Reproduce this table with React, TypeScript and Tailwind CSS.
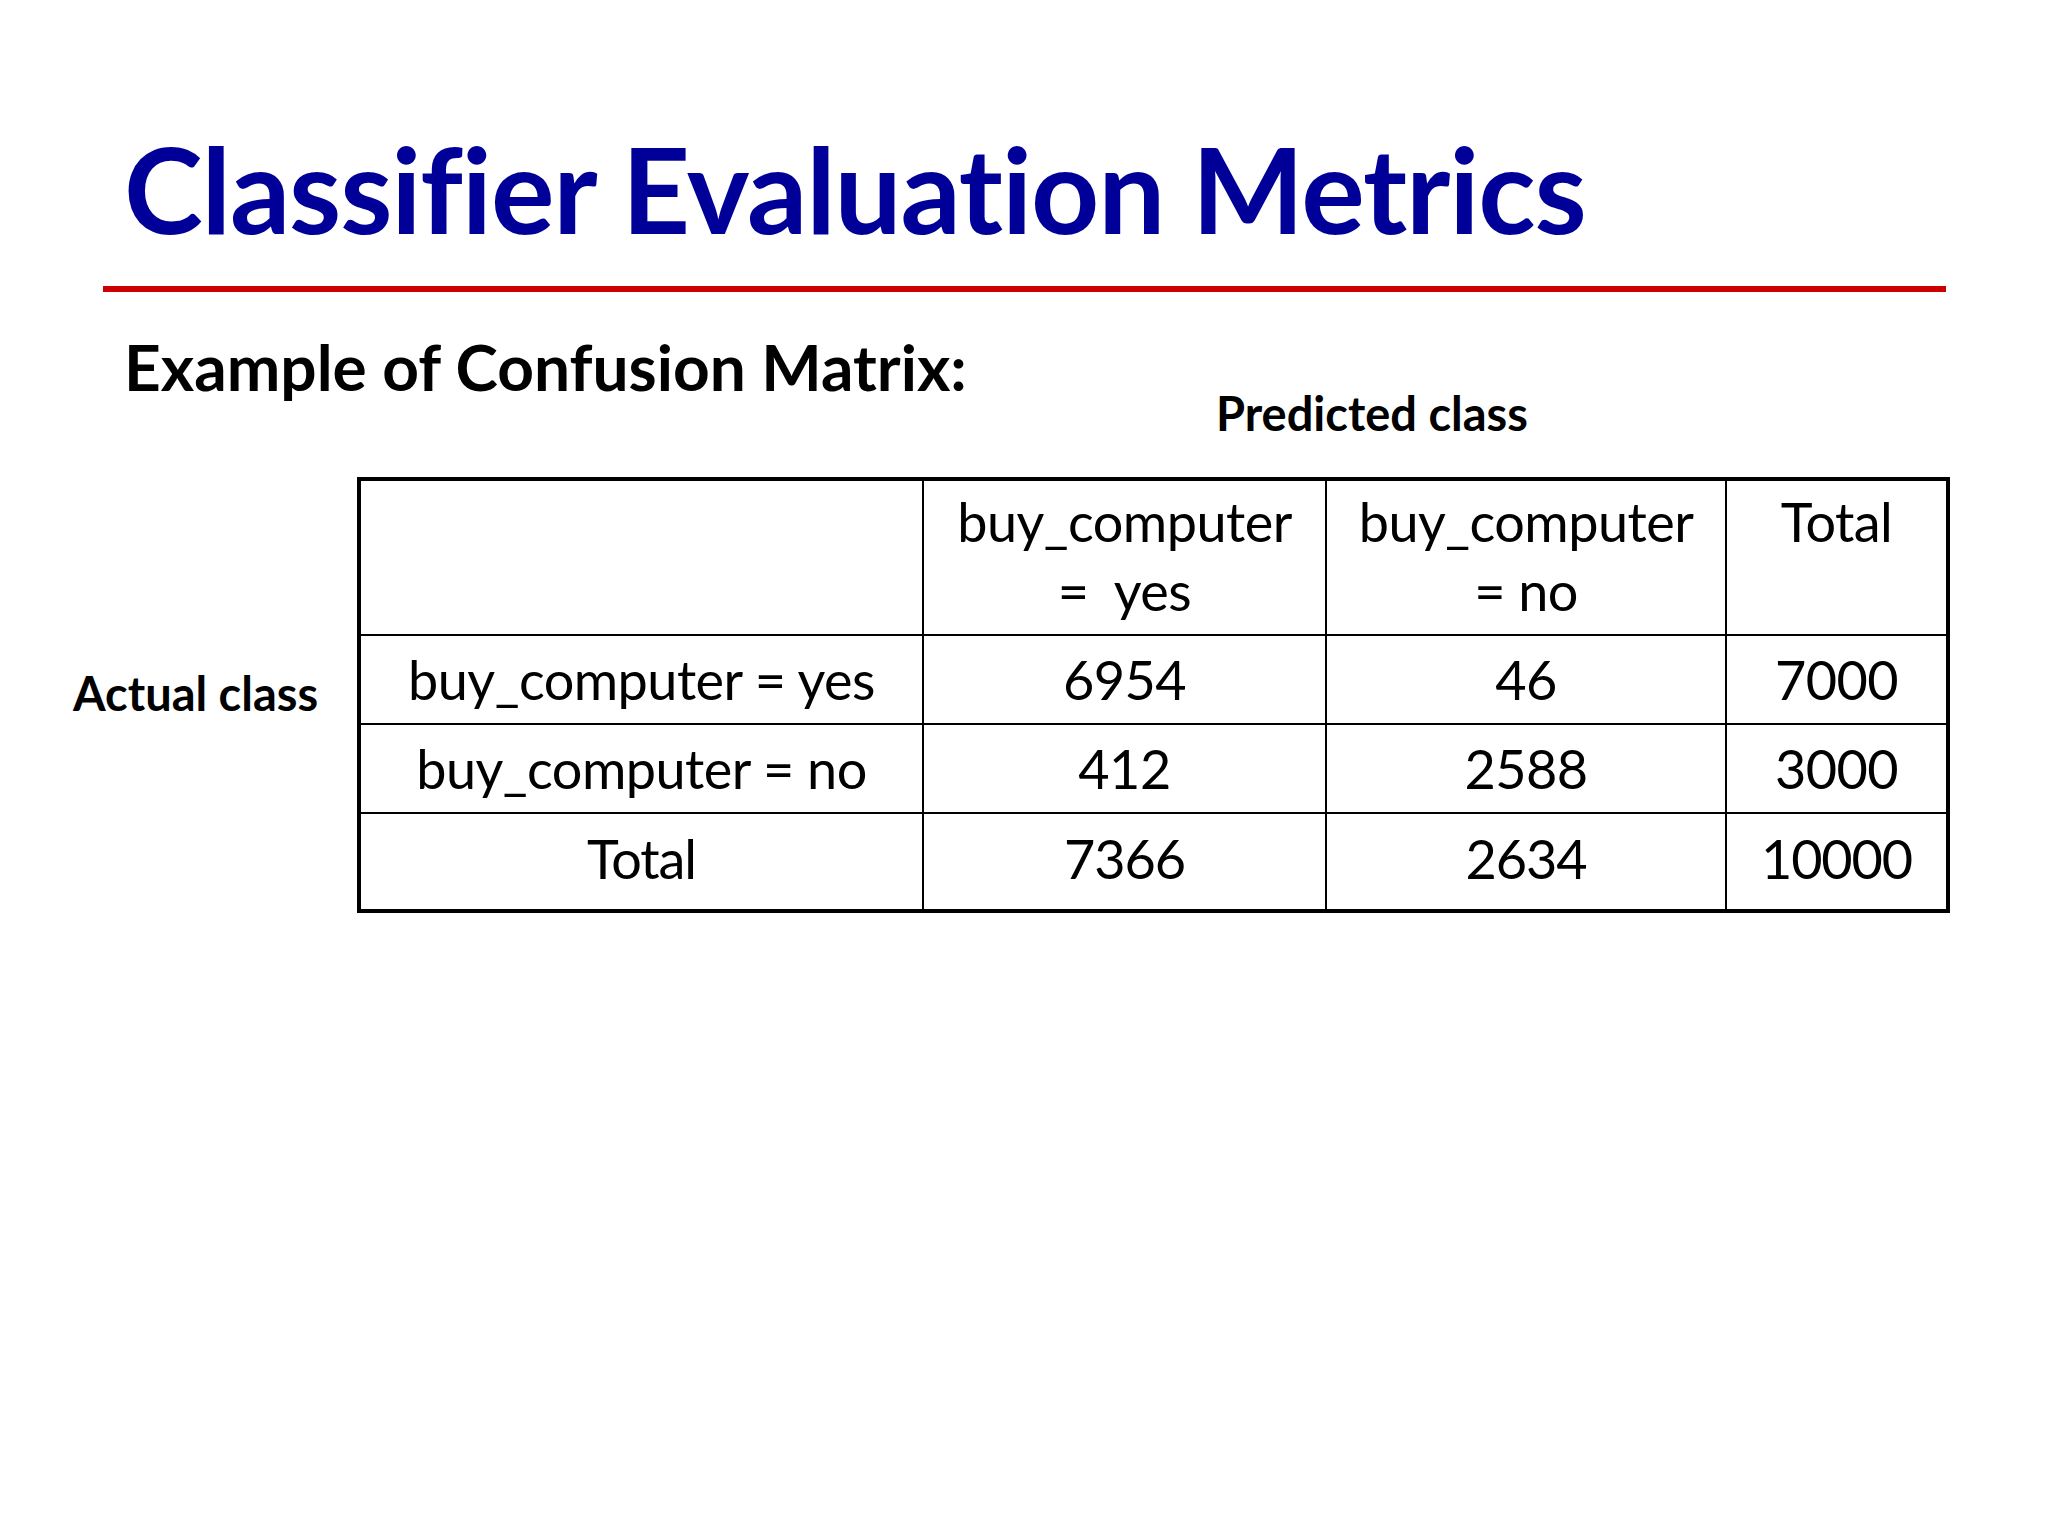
export default function App() {
  const rows = [
    ["buy_computer = yes", "6954", "46", "7000"],
    ["buy_computer = no", "412", "2588", "3000"],
    ["Total", "7366", "2634", "10000"],
  ];

  return (
    <div className="w-[2048px] h-[1536px] bg-white text-black font-['Lato','Open_Sans',sans-serif] overflow-hidden">
      {/* Title */}
      <h1 className="pl-[124px] pt-[129px] text-[119px] leading-none font-bold text-[#000099] tracking-[-0.01em]">
        Classifier Evaluation Metrics
      </h1>
      <div className="ml-[103px] mt-[38px] w-[1843px] h-[6px] bg-[#cc0000]" />

      {/* Subtitle + column label */}
      <div className="flex pl-[124px]">
        <h2 className="w-[1092px] mt-[43px] text-[64px] leading-none font-bold">
          Example of Confusion Matrix:
        </h2>
        <div className="mt-[98px] text-[47px] leading-none font-bold">Predicted class</div>
      </div>

      {/* Table with row label */}
      <div className="flex mt-[40px]">
        <div className="w-[357px] pl-[73px] pt-[193px] text-[47px] leading-none font-bold">
          Actual class
        </div>
        <table className="border-collapse border-[4px] border-black table-fixed w-[1589px] text-[54px] tracking-[-0.01em]">
          <colgroup>
            <col className="w-[564px]" />
            <col className="w-[403px]" />
            <col className="w-[400px]" />
            <col className="w-[222px]" />
          </colgroup>
          <thead>
            <tr className="h-[156px]">
              <th className="border-2 border-black" />
              <th className="border-2 border-black align-top pt-[6px] font-normal leading-[69px]">
                buy_computer
                <br />=&nbsp; yes
              </th>
              <th className="border-2 border-black align-top pt-[6px] font-normal leading-[69px]">
                buy_computer
                <br />= no
              </th>
              <th className="border-2 border-black align-top pt-[6px] font-normal leading-[69px]">Total</th>
            </tr>
          </thead>
          <tbody>
            {rows.map((r, i) => (
              <tr key={i} className={i === 2 ? "h-[98px]" : "h-[89px]"}>
                {r.map((c, j) => (
                  <td
                    key={j}
                    className={
                      i === 2
                        ? "border-2 border-black text-center align-middle leading-none pb-[6px] tracking-[-0.02em]"
                        : "border-2 border-black text-center align-middle leading-none"
                    }
                  >
                    {c}
                  </td>
                ))}
              </tr>
            ))}
          </tbody>
        </table>
      </div>
    </div>
  );
}
